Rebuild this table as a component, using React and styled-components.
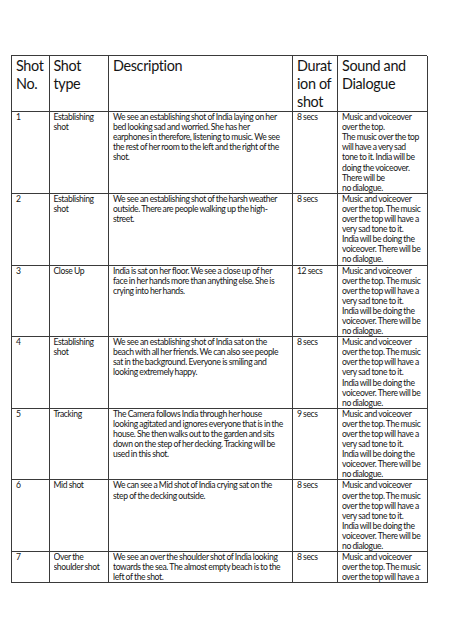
import React from "react";
import styled, { createGlobalStyle } from "styled-components";

const Global = createGlobalStyle`
  html, body { margin: 0; padding: 0; background: #fff; }
  body { width: 453px; height: 640px; overflow: hidden; }
`;

const Page = styled.div`
  padding: 55px 0 0 11px;
  font-family: Lato, "Open Sans", sans-serif;
  color: #151515;
`;

const Grid = styled.div`
  display: grid;
  grid-template-columns: 37.5px 59.5px 184px 45px 90px;
  width: 416px;
  border-top: 1px solid #3a3a3a;
  border-left: 1px solid #3a3a3a;
  box-sizing: border-box;
`;

const Cell = styled.div`
  border-right: 1px solid #3a3a3a;
  border-bottom: 1px solid #3a3a3a;
  padding: ${(p) => (p.$head ? "0.5px 0 0 4px" : "0 0 0 4px")};
  box-sizing: border-box;
  overflow: hidden;
`;

const HeadText = styled.div`
  font-size: 14.4px;
  line-height: 18.2px;
  letter-spacing: -0.35px;
  white-space: nowrap;
`;

const BodyText = styled.div`
  font-size: 8.6px;
  line-height: 10.1px;
  letter-spacing: -0.38px;
  word-spacing: -0.3px;
  white-space: nowrap;
  ${(p) => (p.$clip ? "height: 30px; overflow: hidden;" : "")}
`;

const Line = styled.span`
  display: block;
`;

const headers = [
  ["Shot", "No."],
  ["Shot", "type"],
  ["Description"],
  ["Durat", "ion of", "shot"],
  ["Sound and", "Dialogue"],
];

const standardSound = [
  "Music and voiceover",
  "over the top. The music",
  "over the top will have a",
  "very sad tone to it.",
  "India will be doing the",
  "voiceover. There will be",
  "no dialogue.",
];

const rows = [
  {
    n: "1",
    type: ["Establishing", "shot"],
    desc: [
      "We see an establishing shot of India laying on her",
      "bed looking sad and worried. She has her",
      "earphones in therefore, listening to music. We see",
      "the rest of her room to the left and the right of the",
      "shot.",
    ],
    dur: "8 secs",
    sound: [
      "Music and voiceover",
      "over the top.",
      "The music over the top",
      "will have a very sad",
      "tone to it. India will be",
      "doing the voiceover.",
      "There will be",
      "no dialogue.",
    ],
  },
  {
    n: "2",
    type: ["Establishing", "shot"],
    desc: [
      "We see an establishing shot of the harsh weather",
      "outside. There are people walking up the high-",
      "street.",
    ],
    dur: "8 secs",
    sound: standardSound,
  },
  {
    n: "3",
    type: ["Close Up"],
    desc: [
      "India is sat on her floor. We see a close up of her",
      "face in her hands more than anything else. She is",
      "crying into her hands.",
    ],
    dur: "12 secs",
    sound: standardSound,
  },
  {
    n: "4",
    type: ["Establishing", "shot"],
    desc: [
      "We see an establishing shot of India sat on the",
      "beach with all her friends. We can also see people",
      "sat in the background. Everyone is smiling and",
      "looking extremely happy.",
    ],
    dur: "8 secs",
    sound: standardSound,
  },
  {
    n: "5",
    type: ["Tracking"],
    desc: [
      "The Camera follows India through her house",
      "looking agitated and ignores everyone that is in the",
      "house. She then walks out to the garden and sits",
      "down on the step of her decking. Tracking will be",
      "used in this shot.",
    ],
    dur: "9 secs",
    sound: standardSound,
  },
  {
    n: "6",
    type: ["Mid shot"],
    desc: [
      "We can see a Mid shot of India crying sat on the",
      "step of the decking outside.",
    ],
    dur: "8 secs",
    sound: standardSound,
  },
  {
    n: "7",
    type: ["Over the", "shoulder shot"],
    desc: [
      "We see an over the shoulder shot of India looking",
      "towards the sea. The almost empty beach is to the",
      "left of the shot.",
    ],
    dur: "8 secs",
    sound: standardSound,
    clip: true,
  },
];

function Lines({ items }) {
  return items.map((t, i) => <Line key={i}>{t}</Line>);
}

export default function App() {
  return (
    <>
      <Global />
      <Page>
        <Grid>
          {headers.map((h, i) => (
            <Cell $head key={"h" + i}>
              <HeadText>
                <Lines items={h} />
              </HeadText>
            </Cell>
          ))}
          {rows.map((r) => (
            <React.Fragment key={r.n}>
              <Cell>
                <BodyText $clip={r.clip}>
                  <Line>{r.n}</Line>
                </BodyText>
              </Cell>
              <Cell>
                <BodyText $clip={r.clip}>
                  <Lines items={r.type} />
                </BodyText>
              </Cell>
              <Cell>
                <BodyText $clip={r.clip}>
                  <Lines items={r.desc} />
                </BodyText>
              </Cell>
              <Cell>
                <BodyText $clip={r.clip}>
                  <Line>{r.dur}</Line>
                </BodyText>
              </Cell>
              <Cell>
                <BodyText $clip={r.clip}>
                  <Lines items={r.sound} />
                </BodyText>
              </Cell>
            </React.Fragment>
          ))}
        </Grid>
      </Page>
    </>
  );
}
